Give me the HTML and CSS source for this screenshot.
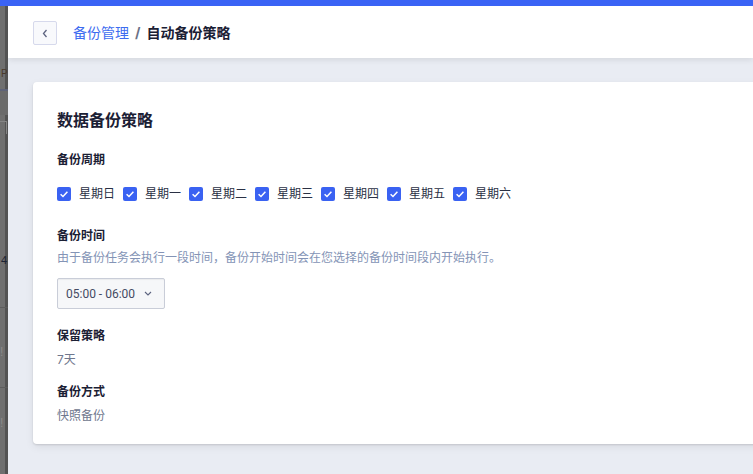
FILE: index.html
```html
<!DOCTYPE html>
<html lang="zh-CN">
<head>
    <meta charset="UTF-8">
    <meta name="viewport" content="width=device-width, initial-scale=1.0">
    <title>自动备份策略</title>
    <link rel="stylesheet" href="styles.css">
</head>
<body>
    <div class="topbar"></div>

    <div class="layout">
        <!-- 抽屉后面被遮住的页面 -->
        <div class="backdrop">
            <span class="bd-letter">P</span>
            <div class="bd-line bd-line-blue"></div>
            <div class="bd-band"></div>
            <div class="bd-box"></div>
            <span class="bd-num">4</span>
            <div class="bd-line bd-line-a"></div>
            <span class="bd-mark">!</span>
            <div class="bd-line bd-line-b"></div>
            <span class="bd-mark bd-mark-2">!</span>
        </div>

        <div class="drawer">
            <header class="page-header">
                <button class="back-btn" type="button" aria-label="返回">
                    <svg width="6" height="9" viewBox="0 0 6 9">
                        <path d="M4.5 1 L1.5 4.5 L4.5 8" fill="none" stroke="#5d6480" stroke-width="1.3"/>
                    </svg>
                </button>
                <nav class="breadcrumb">
                    <a href="#" class="crumb-link">备份管理</a>
                    <span class="crumb-sep">/</span>
                    <span class="crumb-current">自动备份策略</span>
                </nav>
            </header>

            <main class="content">
                <section class="card">
                    <h2 class="card-title">数据备份策略</h2>

                    <div class="field field-cycle">
                        <div class="field-label">备份周期</div>
                        <div class="week-list">
                            <label class="week-item"><span class="check"></span>星期日</label>
                            <label class="week-item"><span class="check"></span>星期一</label>
                            <label class="week-item"><span class="check"></span>星期二</label>
                            <label class="week-item"><span class="check"></span>星期三</label>
                            <label class="week-item"><span class="check"></span>星期四</label>
                            <label class="week-item"><span class="check"></span>星期五</label>
                            <label class="week-item"><span class="check"></span>星期六</label>
                        </div>
                    </div>

                    <div class="field field-time">
                        <div class="field-label">备份时间</div>
                        <div class="field-hint">由于备份任务会执行一段时间，备份开始时间会在您选择的备份时间段内开始执行。</div>
                        <div class="time-select">
                            <span>05:00 - 06:00</span>
                            <svg width="8" height="5" viewBox="0 0 8 5">
                                <path d="M1 1 L4 4 L7 1" fill="none" stroke="#5d6480" stroke-width="1.1"/>
                            </svg>
                        </div>
                    </div>

                    <div class="field field-keep">
                        <div class="field-label">保留策略</div>
                        <div class="field-value">7天</div>
                    </div>

                    <div class="field field-mode">
                        <div class="field-label">备份方式</div>
                        <div class="field-value">快照备份</div>
                    </div>
                </section>
            </main>
        </div>
    </div>
</body>
</html>
```

FILE: styles.css
```css
* {
    box-sizing: border-box;
}
html, body {
    margin: 0;
    padding: 0;
    height: 100%;
    overflow: hidden;
}
body {
    font-family: "Inter", "Noto Sans CJK SC", sans-serif;
    color: #1b2034;
    background-color: #e9ecf3;
    display: flex;
    flex-direction: column;
}
.topbar {
    height: 6px;
    background-color: #3a63f5;
    flex-shrink: 0;
}
.layout {
    flex: 1;
    display: flex;
    min-height: 0;
}

/* 遮罩下的页面 */
.backdrop {
    width: 8px;
    flex-shrink: 0;
    background: linear-gradient(to right, #6f6f6f 5px, #535353 5px);
    display: flex;
    flex-direction: column;
    overflow: hidden;
    font-family: "Liberation Sans", sans-serif;
}
.bd-letter {
    margin-top: 60px;
    margin-left: 1px;
    font-size: 10px;
    line-height: 16px;
    color: #4a3a2c;
}
.bd-line {
    height: 1px;
    background-color: #5d5d5d;
}
.bd-line-blue {
    margin-top: 7px;
    height: 2px;
    background-color: #5e6378;
}
.bd-band {
    height: 24px;
    background-color: #6a6a6a;
}
.bd-box {
    margin-top: 6px;
    height: 13px;
    border-top: 1px solid #858585;
    border-right: 1px solid #858585;
    width: 7px;
}
.bd-num {
    margin-top: 118px;
    margin-left: 1px;
    font-size: 11px;
    line-height: 16px;
    color: #1c2233;
}
.bd-line-a {
    margin-top: 39px;
}
.bd-mark {
    margin-top: 38px;
    font-size: 12px;
    line-height: 12px;
    color: #8a8a8a;
}
.bd-line-b {
    margin-top: 29px;
}
.bd-mark-2 {
    margin-top: 29px;
}

/* 抽屉 */
.drawer {
    flex: 1;
    display: flex;
    flex-direction: column;
    overflow: hidden;
}
.page-header {
    height: 52px;
    background-color: #fff;
    display: flex;
    align-items: center;
    padding-left: 25px;
    gap: 16px;
    box-shadow: 0 2px 6px rgba(0, 0, 0, 0.09);
    position: relative;
    z-index: 1;
    flex-shrink: 0;
}
.back-btn {
    width: 24px;
    height: 24px;
    margin-top: 2px;
    padding: 0;
    border: 1px solid #d6d9ec;
    border-radius: 2px;
    background-color: #f8f9fc;
    display: flex;
    align-items: center;
    justify-content: center;
    cursor: pointer;
}
.breadcrumb {
    display: flex;
    align-items: center;
    font-size: 14px;
    line-height: 20px;
    margin-top: 2px;
}
.crumb-link {
    color: #3d6cf0;
    text-decoration: none;
}
.crumb-sep {
    color: #6b7186;
    margin: 0 6px;
    font-weight: bold;
}
.crumb-current {
    font-weight: bold;
    color: #1b2034;
}

.content {
    flex: 1;
    padding: 24px 0 0 25px;
}
.card {
    background-color: #fff;
    border-radius: 4px;
    margin-right: -20px;
    padding: 24px 24px 18px;
    box-shadow: 0 1px 2px rgba(0, 0, 0, 0.12), 0 3px 8px rgba(0, 0, 0, 0.07);
}
.card-title {
    margin: 0;
    font-size: 16px;
    line-height: 28px;
    font-weight: bold;
    color: #1b2034;
}
.field-label {
    font-size: 12px;
    line-height: 20px;
    font-weight: bold;
    color: #1b2034;
}
.field-cycle {
    margin-top: 16px;
}
.field-time {
    margin-top: 22px;
}
.field-keep {
    margin-top: 17px;
}
.field-mode {
    margin-top: 12px;
}
.field-value {
    margin-top: 4px;
    font-size: 12px;
    line-height: 20px;
    color: #6f778e;
}
.field-hint {
    margin-top: 2px;
    font-size: 12px;
    line-height: 20px;
    color: #8494b6;
}

.week-list {
    margin-top: 14px;
    display: flex;
    gap: 8px;
}
.week-item {
    display: flex;
    align-items: center;
    gap: 8px;
    font-size: 12px;
    line-height: 20px;
    color: #2a3044;
}
.check {
    width: 14px;
    height: 14px;
    border-radius: 2px;
    background-color: #3a62f2;
    background-image: url("data:image/svg+xml,%3Csvg xmlns='http://www.w3.org/2000/svg' width='14' height='14' viewBox='0 0 14 14'%3E%3Cpath d='M3.6 7.2 L6 9.5 L10.4 4.8' fill='none' stroke='%23fff' stroke-width='1.5'/%3E%3C/svg%3E");
}

.time-select {
    margin-top: 10px;
    width: 108px;
    height: 31px;
    border: 1px solid #c9cdd8;
    border-radius: 2px;
    background-color: #f6f7f9;
    box-shadow: inset 0 1px 1px rgba(0, 0, 0, 0.05);
    display: flex;
    align-items: center;
    justify-content: space-between;
    padding: 0 12px 0 8px;
    font-family: "Roboto", "Noto Sans CJK SC", sans-serif;
    font-size: 12px;
    color: #454b63;
}
```
